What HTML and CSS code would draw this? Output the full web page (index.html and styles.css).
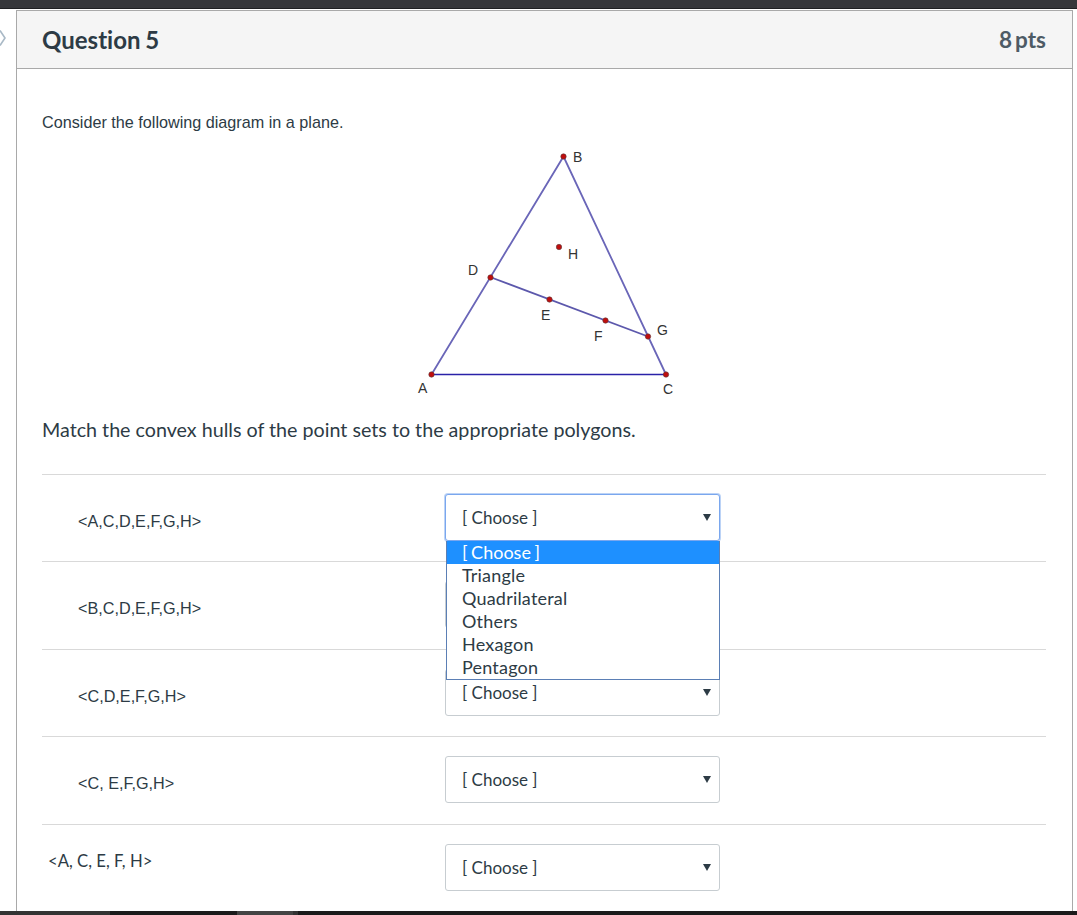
FILE: index.html
```html
<!DOCTYPE html>
<html lang="en">
<head>
<meta charset="utf-8">
<title>Question 5</title>
<link rel="stylesheet" href="styles.css">
</head>
<body>
<div class="page">
  <div class="topbar"></div>
  <div class="workspace">
    <div class="gutter">
      <svg class="chevron" width="6" height="16" viewBox="0 0 6 16"><path d="M0 .5 L5 8 L0 15.5" fill="none" stroke="#a9b9c6" stroke-width="1.6"/></svg>
    </div>
    <section class="card">
      <header class="card-head">
        <h2 class="q-title">Question 5</h2>
        <div class="q-pts">8 pts</div>
      </header>
      <div class="card-body">
        <p class="intro">Consider the following diagram in a plane.</p>
        <svg class="diagram" width="300" height="260" viewBox="400 145 300 260">
          <g fill="none" stroke-linecap="round">
            <path d="M431.5 374.5 L563.5 156.5 L666 374.5" stroke="#6a66b8" stroke-width="1.8"/>
            <path d="M490 277 L648 336.5" stroke="#5c58ac" stroke-width="1.8"/>
            <path d="M431.5 374.5 L666 374.5" stroke="#2a22a8" stroke-width="1.5"/>
          </g>
          <g fill="#c00d0d" stroke="#5a3a3a" stroke-width="0.6">
            <circle cx="431.5" cy="374.5" r="2.7"/>
            <circle cx="563.5" cy="156.5" r="2.7"/>
            <circle cx="666" cy="374.5" r="2.7"/>
            <circle cx="490.5" cy="277.5" r="2.7"/>
            <circle cx="549.5" cy="299.5" r="2.7"/>
            <circle cx="605.5" cy="320.5" r="2.7"/>
            <circle cx="648" cy="336.5" r="2.7"/>
            <circle cx="559" cy="247" r="2.7"/>
          </g>
          <g class="pt-labels">
            <text x="418" y="393">A</text>
            <text x="573" y="162">B</text>
            <text x="663" y="394">C</text>
            <text x="468" y="275">D</text>
            <text x="541" y="320">E</text>
            <text x="594" y="341">F</text>
            <text x="657" y="335">G</text>
            <text x="568" y="259">H</text>
          </g>
        </svg>
        <p class="lead">Match the convex hulls of the point sets to the appropriate polygons.</p>

        <div class="rows">
          <div class="row">
            <div class="row-label">&lt;A,C,D,E,F,G,H&gt;</div>
            <div class="select-wrap">
              <div class="select is-open">[ Choose ]<span class="arrow"></span></div>
              <ul class="menu">
                <li class="menu-item is-selected">[ Choose ]</li>
                <li class="menu-item">Triangle</li>
                <li class="menu-item">Quadrilateral</li>
                <li class="menu-item">Others</li>
                <li class="menu-item">Hexagon</li>
                <li class="menu-item">Pentagon</li>
              </ul>
            </div>
          </div>
          <div class="row">
            <div class="row-label">&lt;B,C,D,E,F,G,H&gt;</div>
            <div class="select-wrap"><div class="select"></div></div>
          </div>
          <div class="row">
            <div class="row-label">&lt;C,D,E,F,G,H&gt;</div>
            <div class="select-wrap"><div class="select">[ Choose ]<span class="arrow"></span></div></div>
          </div>
          <div class="row">
            <div class="row-label">&lt;C, E,F,G,H&gt;</div>
            <div class="select-wrap"><div class="select">[ Choose ]<span class="arrow"></span></div></div>
          </div>
          <div class="row">
            <div class="row-label row-label-alt">&lt;A, C, E, F, H&gt;</div>
            <div class="select-wrap"><div class="select">[ Choose ]<span class="arrow"></span></div></div>
          </div>
        </div>
      </div>
    </section>
  </div>
  <div class="bottombar">
    <span class="seg seg-a"></span><span class="seg seg-b"></span><span class="seg seg-c"></span><span class="seg seg-d"></span><span class="seg seg-e"></span>
  </div>
</div>
</body>
</html>
```

FILE: styles.css
```css
* { box-sizing: border-box; }
html, body { margin: 0; padding: 0; height: 100%; background: #fff; overflow: hidden; }
body { font-family: Lato, "Liberation Sans", sans-serif; color: #2d3b45; font-variant-ligatures: none; }

.page { height: 915px; display: flex; flex-direction: column; }
.topbar { height: 10px; flex: none; background: #fff; border-top: 8px solid #36373b; box-shadow: inset 0 1px 0 #1f2023; }
.workspace { flex: 1; display: flex; min-height: 0; }
.gutter { width: 16px; flex: none; padding-top: 20px; }
.chevron { display: block; }

.card { width: 1057px; flex: none; border: 1px solid #a9a9a9; border-bottom: 0; display: flex; flex-direction: column; }
.card-head { height: 58px; flex: none; background: #f5f5f5; border-bottom: 1px solid #a9a9a9; display: flex; align-items: center; justify-content: space-between; padding: 0 26px 0 25px; }
.q-title { margin: 0; font-size: 24px; font-weight: 700; color: #2d3b45; word-spacing: -1px; }
.q-pts { font-size: 22.5px; font-weight: 700; color: #4e5b65; word-spacing: -2.5px; }

.card-body { padding: 0 26px 0 25px; }
.intro { margin: 45px 0 0; height: 17px; line-height: 17px; font-family: "Liberation Sans", Arial, sans-serif; font-size: 16.2px; }
.diagram { display: block; margin: 14px 0 0 358px; }
.pt-labels { font-family: "Liberation Sans", Arial, sans-serif; font-size: 14px; fill: #333; }
.lead { margin: 13px 0 0; height: 24px; line-height: 24px; font-size: 19.7px; }

.rows { margin-top: 32px; }
.row { height: 87px; border-top: 1px solid #d9d9d9; display: flex; padding-top: 19px; }
.row:nth-child(even) { height: 88px; }
.row-label { width: 403px; flex: none; padding: 18px 0 0 36px; font-family: "Liberation Sans", Arial, sans-serif; font-size: 16.2px; line-height: 18px; }
.row-label-alt { padding: 8px 0 0 6px; font-family: Lato, sans-serif; font-size: 16.7px; }

.select-wrap { position: relative; width: 275px; }
.select { height: 47px; border: 1px solid #c7cdd1; border-radius: 3px; background: #fff; padding: 12px 0 0 16px; font-size: 17px; line-height: 22px; position: relative; }
.select.is-open { border-color: #7aa7ee; box-shadow: 0 0 0 1px rgba(122,167,238,.5); }
.arrow { position: absolute; right: 8px; top: 19px; width: 0; height: 0; border-left: 4px solid transparent; border-right: 4px solid transparent; border-top: 7px solid #2d3b45; }

.menu { position: absolute; z-index: 2; left: 1px; top: 47px; width: 274px; margin: 0; padding: 0; list-style: none; background: #fff; border: 1px solid #5b7fb5; border-top: 0; }
.menu-item { height: 23px; line-height: 23px; padding-left: 15px; font-size: 18px; letter-spacing: .2px; color: #2d3b45; }
.menu-item.is-selected { background: #1e90ff; color: #fff; letter-spacing: 0; word-spacing: -1px; }

.bottombar { height: 4px; flex: none; display: flex; background: #1b1b1b; }
.seg { display: block; height: 100%; }
.seg-a { width: 110px; background: #333; }
.seg-b { width: 127px; background: #1b1b1b; }
.seg-c { width: 56px; background: #444; }
.seg-d { width: 5px; background: #333; }
.seg-e { flex: 1; background: #1b1b1b; }
```
